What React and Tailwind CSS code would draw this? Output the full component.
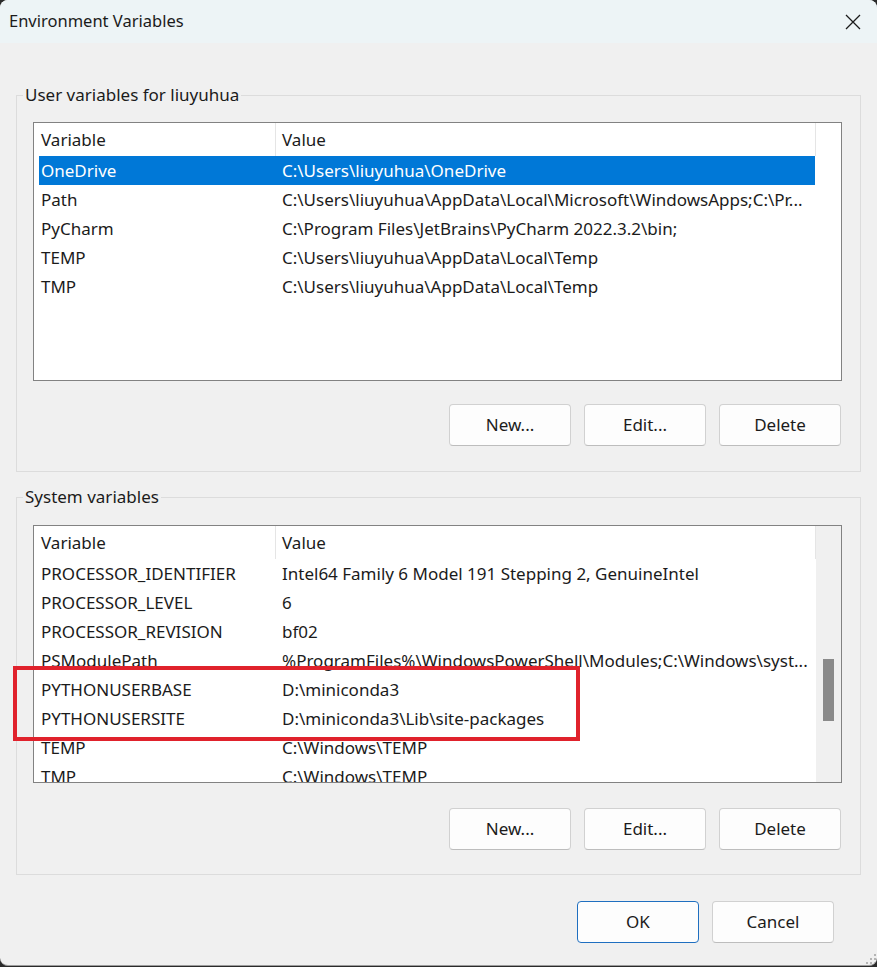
import React from 'react';

const font = { fontFamily: '"Noto Sans", "Open Sans", sans-serif' };

const userVars = [
  ['OneDrive', 'C:\\Users\\liuyuhua\\OneDrive'],
  ['Path', 'C:\\Users\\liuyuhua\\AppData\\Local\\Microsoft\\WindowsApps;C:\\Pr...'],
  ['PyCharm', 'C:\\Program Files\\JetBrains\\PyCharm 2022.3.2\\bin;'],
  ['TEMP', 'C:\\Users\\liuyuhua\\AppData\\Local\\Temp'],
  ['TMP', 'C:\\Users\\liuyuhua\\AppData\\Local\\Temp'],
];

const systemVars = [
  ['PROCESSOR_IDENTIFIER', 'Intel64 Family 6 Model 191 Stepping 2, GenuineIntel'],
  ['PROCESSOR_LEVEL', '6'],
  ['PROCESSOR_REVISION', 'bf02'],
  ['PSModulePath', '%ProgramFiles%\\WindowsPowerShell\\Modules;C:\\Windows\\syst...'],
  ['PYTHONUSERBASE', 'D:\\miniconda3'],
  ['PYTHONUSERSITE', 'D:\\miniconda3\\Lib\\site-packages'],
  ['TEMP', 'C:\\Windows\\TEMP'],
  ['TMP', 'C:\\Windows\\TEMP'],
];

function Button({ children, primary }) {
  return (
    <button
      className={
        'w-[122px] h-[42px] rounded-[4px] bg-[#fdfdfd] text-[17px] text-[#1b1b1b] ' +
        (primary ? 'border border-[#1f6fc0]' : 'border border-[#d1d1d1] border-b-[#bdbdbd]')
      }
    >
      {children}
    </button>
  );
}

function VarList({ rows, selected, scroll, height }) {
  return (
    <div className={'flex border border-[#828282] bg-white overflow-hidden ' + height}>
      <div className="w-[782px] overflow-hidden">
        <div className="flex h-[33px] items-center text-[17px] text-[#1b1b1b]">
          <div className="w-[242px] h-full flex items-center pl-[7px] border-r border-[#e5e5e5]">Variable</div>
          <div className="w-[540px] h-full flex items-center pl-[6px] border-r border-[#e5e5e5]">Value</div>
        </div>
        {rows.map(([name, value], i) => (
          <div
            key={name + i}
            className={
              'ml-[5px] w-[776px] h-[29px] flex items-center text-[17px] whitespace-nowrap ' +
              (selected === i ? 'bg-[#0078d7] text-white' : 'text-[#1b1b1b]')
            }
          >
            <div className="w-[236px] pl-[2px] overflow-hidden">{name}</div>
            <div className="w-[540px] pl-[7px] overflow-hidden">{value}</div>
          </div>
        ))}
      </div>
      {scroll ? (
        <div className="flex-1 bg-[#f0f0f0] relative">
          <div className="absolute left-[7px] top-[133px] w-[11px] h-[62px] bg-[#8a8a8a]" />
        </div>
      ) : (
        <div className="flex-1" />
      )}
    </div>
  );
}

function Group({ title, children }) {
  return (
    <fieldset className="ml-[16px] w-[845px] border border-[#dcdcdc] pl-[16px] pr-[18px]">
      <legend className="ml-[-10px] px-[2px] h-[22px] leading-[22px] text-[17px] text-[#1b1b1b]">{title}</legend>
      {children}
    </fieldset>
  );
}

export default function App() {
  return (
    <div className="bg-[#2b2b2b] h-[967px] w-[877px] overflow-hidden" style={font}>
      <div className="relative h-[966px] w-[877px] bg-[#f0f0f0] rounded-lg overflow-hidden border-b border-[#9c9c9c]">
        <div className="h-[43px] bg-[#edf4f6] flex items-center justify-between pl-[9px] pr-[16px]">
          <span className="text-[16.5px] text-[#1b1b1b]">Environment Variables</span>
          <svg width="16" height="16" viewBox="0 0 16 16" className="text-[#1b1b1b]">
            <path d="M1 1 L15 15 M15 1 L1 15" stroke="currentColor" strokeWidth="1.3" fill="none" />
          </svg>
        </div>

        <div className="pt-[41px]">
          <Group title="User variables for liuyuhua">
            <div className="mt-[16px]">
              <VarList rows={userVars} selected={0} height="h-[259px]" />
            </div>
            <div className="flex justify-end gap-[13px] mt-[23px] mb-[25px] pr-[1px]">
              <Button>New...</Button>
              <Button>Edit...</Button>
              <Button>Delete</Button>
            </div>
          </Group>

          <div className="h-[14px]" />

          <Group title="System variables">
            <div className="mt-[17px]">
              <VarList rows={systemVars} scroll height="h-[258px]" />
            </div>
            <div className="flex justify-end gap-[13px] mt-[25px] mb-[24px] pr-[1px]">
              <Button>New...</Button>
              <Button>Edit...</Button>
              <Button>Delete</Button>
            </div>
          </Group>

          <div className="flex justify-end gap-[13px] mt-[26px] pr-[43px]">
            <Button primary>OK</Button>
            <Button>Cancel</Button>
          </div>
        </div>

        <div className="absolute left-[13px] top-[666px] w-[567px] h-[75px] border-[4px] border-[#e0222c]" />

        <svg className="absolute right-[1px] bottom-[1px]" width="10" height="10" viewBox="0 0 10 10">
          <g fill="#b5b5b5">
            <rect x="8" y="0" width="2" height="2" />
            <rect x="4" y="4" width="2" height="2" />
            <rect x="8" y="4" width="2" height="2" />
            <rect x="0" y="8" width="2" height="2" />
            <rect x="4" y="8" width="2" height="2" />
            <rect x="8" y="8" width="2" height="2" />
          </g>
        </svg>
      </div>
    </div>
  );
}
